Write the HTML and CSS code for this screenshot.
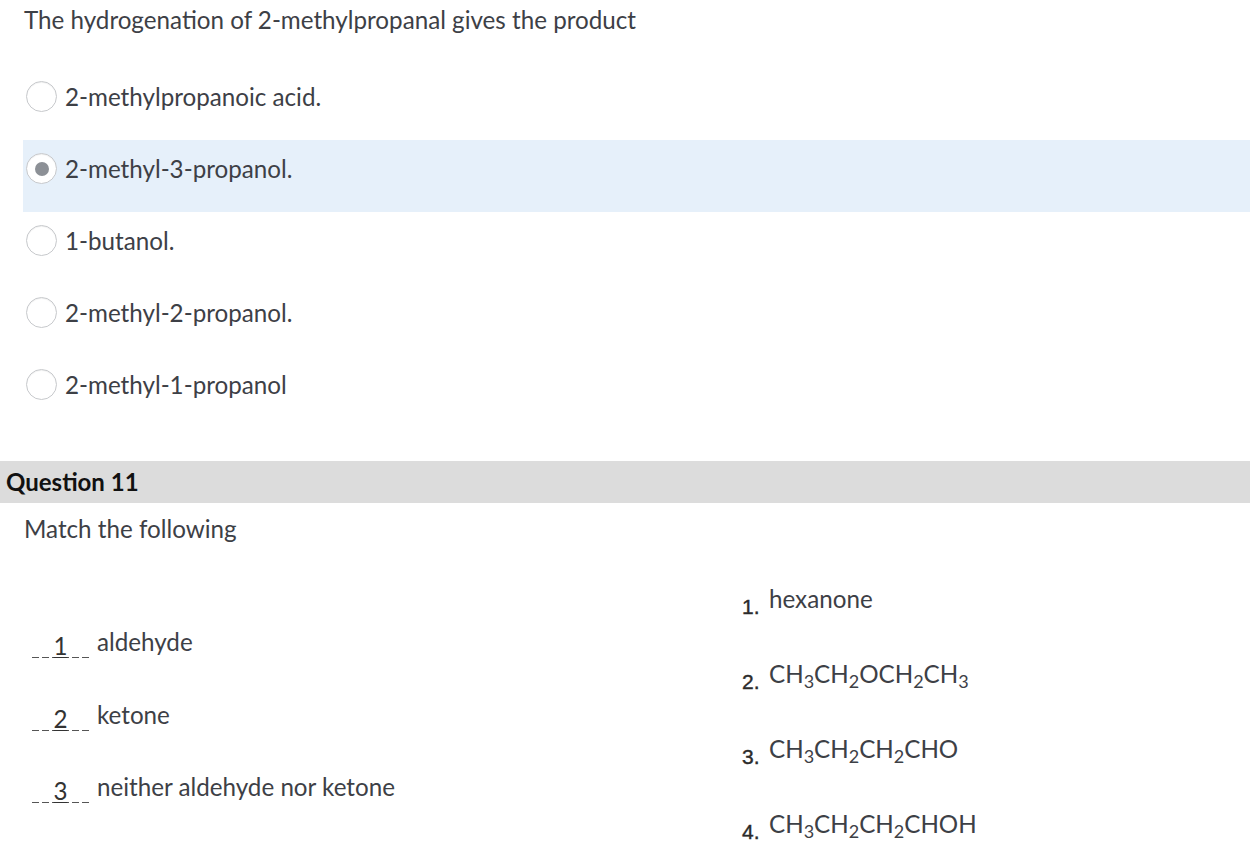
FILE: index.html
```html
<!DOCTYPE html>
<html>
<head>
<meta charset="utf-8">
<link rel="stylesheet" href="styles.css">
</head>
<body>
<section class="q10">
  <p class="qtext">The hydrogenation of 2-methylpropanal gives the product</p>
  <ul class="options">
    <li class="opt"><span class="radio"></span><span>2-methylpropanoic acid.</span></li>
    <li class="opt selected"><span class="radio checked"></span><span>2-methyl-3-propanol.</span></li>
    <li class="opt"><span class="radio"></span><span>1-butanol.</span></li>
    <li class="opt"><span class="radio"></span><span>2-methyl-2-propanol.</span></li>
    <li class="opt"><span class="radio"></span><span>2-methyl-1-propanol</span></li>
  </ul>
</section>
<section class="q11">
  <h2 class="qhead">Question 11</h2>
  <p class="qtext">Match the following</p>
  <div class="match">
    <ul class="left">
      <li><span class="blank"><span class="num">1</span></span><span>aldehyde</span></li>
      <li><span class="blank"><span class="num">2</span></span><span>ketone</span></li>
      <li><span class="blank"><span class="num">3</span></span><span>neither aldehyde nor ketone</span></li>
    </ul>
    <ol class="right">
      <li><span class="n">1.</span><span class="t">hexanone</span></li>
      <li><span class="n">2.</span><span class="t">CH<sub>3</sub>CH<sub>2</sub>OCH<sub>2</sub>CH<sub>3</sub></span></li>
      <li><span class="n">3.</span><span class="t">CH<sub>3</sub>CH<sub>2</sub>CH<sub>2</sub>CHO</span></li>
      <li><span class="n">4.</span><span class="t">CH<sub>3</sub>CH<sub>2</sub>CH<sub>2</sub>CHOH</span></li>
    </ol>
  </div>
</section>
</body>
</html>
```

FILE: styles.css
```css
* { box-sizing: border-box; }
html, body { margin: 0; padding: 0; background: #fff; }
body {
  font-family: Lato, "Open Sans", sans-serif;
  font-size: 24.2px;
  color: #3d4046;
  width: 1250px;
  overflow: hidden;
}
p, ul, ol, h2 { margin: 0; padding: 0; list-style: none; }

.q10 { padding-top: 4px; }
.qtext { padding-left: 24px; line-height: 32px; }
.options { margin-top: 32px; }
.opt {
  display: flex;
  align-items: flex-start;
  height: 72px;
  margin-left: 23px;
  padding: 13px 0 0 3px;
  line-height: 32px;
}
.opt.selected { background: #e6f0fa; }
.radio {
  width: 31px; height: 31px;
  border-radius: 50%;
  border: 1px solid #c7c9cc;
  background: #fff;
  margin-right: 8px;
  flex: none;
  display: flex; align-items: center; justify-content: center;
  box-shadow: inset 0 1px 1px rgba(0,0,0,0.06);
}
.radio.checked::after {
  content: "";
  width: 14px; height: 14px;
  border-radius: 50%;
  background: #8c9096;
}

.q11 { margin-top: 33px; }
.qhead {
  background: #dcdcdc;
  height: 42px;
  line-height: 42px;
  padding-left: 6px;
  font-size: 24px;
  font-weight: 700;
  color: #111;
}
.q11 .qtext { margin-top: 10px; }

.match { display: flex; margin-top: 39px; }
.left { width: 742px; padding-top: 43px; }
.left li { display: flex; align-items: flex-start; height: 72.5px; line-height: 30px; }
.blank {
  flex: none;
  display: flex;
  justify-content: center;
  width: 57px;
  height: 36px;
  margin-left: 32px;
  margin-right: 8px;
  background: repeating-linear-gradient(to right, #555 0 7px, transparent 7px 10px) left 30px / 100% 1px no-repeat;
}
.num {
  display: block;
  line-height: 30px;
  margin-top: 4px;
  color: #333;
  text-decoration: underline;
  text-decoration-thickness: 1px;
  text-underline-offset: 2px;
}
.right li { display: flex; align-items: flex-start; height: 75px; line-height: 30px; }
.right .n {
  font-family: "Liberation Sans", Arial, sans-serif;
  font-size: 21px;
  color: #2b2b2b;
  width: 27px;
  padding-top: 8px;
  -webkit-text-stroke: 0.4px #2b2b2b;
}
sub { font-size: 18px; line-height: 0; vertical-align: -5px; }
```
